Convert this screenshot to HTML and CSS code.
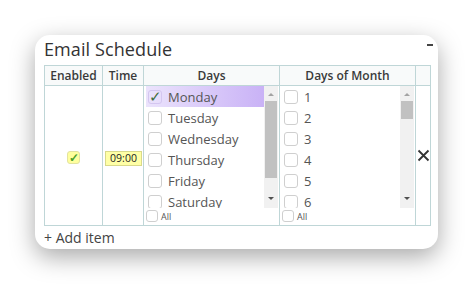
FILE: index.html
```html
<!DOCTYPE html>
<html lang="en">
<head>
    <meta charset="UTF-8">
    <title>Email Schedule</title>
    <link rel="stylesheet" href="styles.css">
</head>
<body>
    <div class="card">
        <div class="card-head">
            <h2>Email Schedule</h2>
            <span class="collapse"></span>
        </div>
        <table class="schedule">
            <thead>
                <tr>
                    <th class="col-enabled">Enabled</th>
                    <th class="col-time">Time</th>
                    <th class="col-days">Days</th>
                    <th class="col-month">Days of Month</th>
                    <th class="col-del"></th>
                </tr>
            </thead>
            <tbody>
                <tr>
                    <td class="center"><span class="check yellow">✓</span></td>
                    <td class="center"><span class="time">09:00</span></td>
                    <td class="picker">
                        <div class="scroll-box">
                            <ul class="options">
                                <li class="selected"><span class="check plain">✓</span>Monday</li>
                                <li><span class="check"></span>Tuesday</li>
                                <li><span class="check"></span>Wednesday</li>
                                <li><span class="check"></span>Thursday</li>
                                <li><span class="check"></span>Friday</li>
                                <li><span class="check"></span>Saturday</li>
                            </ul>
                            <div class="bar">
                                <span class="arrow up"></span>
                                <span class="thumb long"></span>
                                <span class="arrow down"></span>
                            </div>
                        </div>
                        <div class="all"><span class="check small"></span>All</div>
                    </td>
                    <td class="picker">
                        <div class="scroll-box">
                            <ul class="options">
                                <li><span class="check"></span>1</li>
                                <li><span class="check"></span>2</li>
                                <li><span class="check"></span>3</li>
                                <li><span class="check"></span>4</li>
                                <li><span class="check"></span>5</li>
                                <li><span class="check"></span>6</li>
                            </ul>
                            <div class="bar">
                                <span class="arrow up"></span>
                                <span class="thumb short"></span>
                                <span class="arrow down"></span>
                            </div>
                        </div>
                        <div class="all"><span class="check small"></span>All</div>
                    </td>
                    <td class="center del">
                        <svg width="13" height="13" viewBox="0 0 13 13">
                            <path d="M1.5 1.5 L11.5 11.5 M11.5 1.5 L1.5 11.5" stroke="#333" stroke-width="1.8" fill="none"/>
                        </svg>
                    </td>
                </tr>
            </tbody>
        </table>
        <div class="add-item">+ Add item</div>
    </div>
</body>
</html>
```

FILE: styles.css
```css
* {
    margin: 0;
    padding: 0;
    box-sizing: border-box;
}

body {
    font-family: 'Open Sans', sans-serif;
    background: #fff;
    padding: 35px 36px 36px 35px;
    height: 285px;
    overflow: hidden;
}

.card {
    width: 403px;
    height: 214px;
    background: #fff;
    border-radius: 15px;
    box-shadow: 0 8px 24px rgba(0, 0, 0, 0.34);
    padding: 0 8px 0 9px;
}

.card-head {
    height: 30px;
    display: flex;
    justify-content: space-between;
    align-items: flex-start;
}

.card-head h2 {
    font-family: 'Open Sans', sans-serif;
    font-weight: 400;
    font-size: 18px;
    color: #333;
    line-height: 24px;
    padding-top: 2px;
    letter-spacing: 0.1px;
}

.collapse {
    width: 6px;
    height: 2px;
    background: #444;
    margin-top: 9px;
    margin-right: -3px;
}

.schedule {
    border-collapse: collapse;
    table-layout: fixed;
    width: 386px;
}

.schedule th,
.schedule td {
    border: 1px solid #bfd6d7;
}

.schedule th {
    height: 20px;
    font-size: 12px;
    font-weight: 600;
    color: #3a3a3a;
    background: #f8fafa;
    line-height: 18px;
}

.col-enabled { width: 58px; }
.col-time { width: 41px; }
.col-days { width: 136px; }
.col-month { width: 136px; }
.col-del { width: 15px; }

.schedule td {
    height: 140px;
    vertical-align: top;
}

.schedule td.center {
    text-align: center;
    vertical-align: middle;
}

.check {
    display: inline-flex;
    align-items: center;
    justify-content: center;
    width: 14px;
    height: 14px;
    border: 1px solid #cfcfcf;
    border-radius: 3px;
    background: #fff;
    font-size: 12px;
    color: #3d8a2a;
    line-height: 1;
    flex-shrink: 0;
}

.check.yellow {
    background: #ffff9e;
    border-color: #e3e3a0;
    width: 13px;
    height: 13px;
    color: #4aa02c;
    font-weight: bold;
}

.check.plain {
    background: transparent;
    border-color: #d4c6f0;
    color: #3f6e3f;
    font-size: 15px;
}

.check.small {
    width: 12px;
    height: 12px;
}

.time {
    display: inline-block;
    background: #ffffa6;
    border: 1px solid #d9d98a;
    font-size: 10.5px;
    color: #222;
    padding: 0 2px;
    line-height: 13px;
    width: 37px;
    margin-left: 1px;
}

.picker {
    padding: 0;
}

.scroll-box {
    display: flex;
    height: 122px;
}

.options {
    list-style: none;
    flex: 1;
    overflow: hidden;
    padding-left: 2px;
}

.options li {
    display: flex;
    align-items: center;
    gap: 6px;
    height: 21px;
    font-size: 13px;
    color: #555;
    padding-left: 2px;
    white-space: nowrap;
}

.options li.selected {
    background: linear-gradient(90deg, #ebe3fc, #c9b2f6);
}

.bar {
    width: 14px;
    background: #f1f1f1;
    display: flex;
    flex-direction: column;
    align-items: center;
    margin-right: 1px;
}

.arrow {
    width: 0;
    height: 0;
    border-left: 3px solid transparent;
    border-right: 3px solid transparent;
    margin: 7px 0 5px;
}

.arrow.up {
    border-bottom: 3px solid #a3a3a3;
}

.arrow.down {
    border-top: 3px solid #505050;
    margin-top: auto;
    margin-bottom: 8px;
}

.thumb {
    width: 12px;
    background: #c1c1c1;
}

.thumb.long {
    height: 77px;
}

.thumb.short {
    height: 18px;
}

.all {
    display: flex;
    align-items: center;
    gap: 3px;
    height: 16px;
    font-size: 9px;
    color: #555;
    padding-left: 2px;
}

.del svg {
    display: block;
    margin: 0 auto;
}

.add-item {
    font-size: 14px;
    color: #444;
    line-height: 22px;
    padding-top: 1px;
}
```
